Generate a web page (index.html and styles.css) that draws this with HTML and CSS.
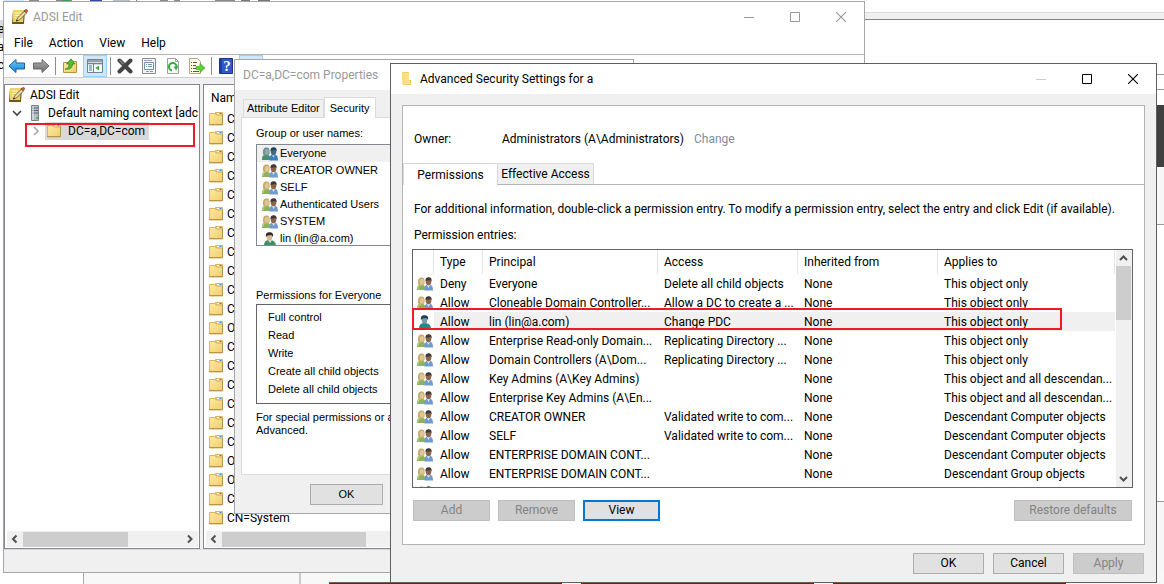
FILE: index.html
```html
<!DOCTYPE html>
<html lang="en">
<head>
  <meta charset="UTF-8">
  <meta name="viewport" content="width=device-width, initial-scale=1.0">
  <title>ADSI Edit - Advanced Security Settings</title>
  <link rel="stylesheet" href="styles.css">
</head>
<body>
  <!-- Shared icons -->
  <svg class="defs" aria-hidden="true">
    <defs>
      <linearGradient id="gold" x1="0" y1="0" x2="1" y2="1">
        <stop offset="0" stop-color="#ffeaa2"/>
        <stop offset="1" stop-color="#f0cc72"/>
      </linearGradient>
      <linearGradient id="blue" x1="0" y1="0" x2="0" y2="1">
        <stop offset="0" stop-color="#6fd0ff"/>
        <stop offset="1" stop-color="#0e7fd0"/>
      </linearGradient>
      <linearGradient id="grey" x1="0" y1="0" x2="0" y2="1">
        <stop offset="0" stop-color="#b0b0b0"/>
        <stop offset="1" stop-color="#6c6c6c"/>
      </linearGradient>
      <symbol id="i-app" viewBox="0 0 16 16">
        <path d="M1 1h12l-1 14H0z" fill="#6f5a10"/>
        <path d="M1 1h11l-1 12H1z" fill="#ecd36c"/>
        <path d="M3 4h6M3 6.500h5M3 9h3" stroke="#fff7d0" stroke-width="1.200"/>
        <path d="M4.500 12l1-3 7-7 2 2-7 7z" fill="#e9dca8" stroke="#5b4a22" stroke-width=".8"/>
        <path d="M12 2l1.300-1.200a1.200 1.200 0 0 1 2 2L14.200 4z" fill="#d4523c" stroke="#6b4b3c" stroke-width=".5"/>
        <path d="M4 12.500l.8-2 1.200 1.200z" fill="#222"/>
      </symbol>
      <symbol id="i-folder" viewBox="0 0 14 14">
        <path d="M.5 1.500h6v1h7v10.500H.5z" fill="url(#gold)" stroke="#d8b662"/>
        <path d="M6.500.5h7v2.500h-6z" fill="#efe0ae" stroke="#c9a44e" stroke-width=".8"/>
        <path d="M8.500 1.500h2" stroke="#fff"/>
        <path d="M10.500 1.500h2" stroke="#2f8ee0"/>
        <path d="M0 12.500h13.500V3" fill="none" stroke="#b8944a"/>
      </symbol>
      <symbol id="i-users" viewBox="0 0 16 14">
        <path d="M0 13c0-4 1-5.500 4-5.500s4.500 1.500 4.500 5.500z" fill="#8cb25c"/>
        <path d="M1 12c0-3 .5-3.500 3-3.500" stroke="#c3d99b" fill="none"/>
        <path d="M1 7C.5 2 2 .5 4.500.5S8 2 7.500 7l-2 1.500h-3z" fill="#c2ae66"/>
        <ellipse cx="4.800" cy="4.800" rx="2" ry="2.800" fill="#e5c39d"/>
        <path d="M7.500 13.500c0-4.500 1-6 4-6s4.500 1.500 4.500 6z" fill="#6f9bcf"/>
        <path d="M10 8l1.500 3 1.500-3z" fill="#dfe9f6"/>
        <ellipse cx="11.500" cy="4.500" rx="2.800" ry="3.700" fill="#8d6446"/>
        <path d="M8.500 4C8.300 1.200 9.600.3 11.600.3s3.400 1 3 4.200L13.600 3z" fill="#3f3a38"/>
      </symbol>
      <symbol id="i-users-on" viewBox="0 0 16 14">
        <path d="M0 13c0-4 1-5.500 4-5.500s4.500 1.500 4.500 5.500z" fill="#46916f"/>
        <path d="M1 7C.5 2 2 .5 4.500.5S8 2 7.500 7l-2 1.500h-3z" fill="#6f8f8a"/>
        <ellipse cx="4.800" cy="4.800" rx="2" ry="2.800" fill="#8fa9ae"/>
        <path d="M7.500 13.500c0-4.500 1-6 4-6s4.500 1.500 4.500 6z" fill="#3a7cc0"/>
        <path d="M10 8l1.500 3 1.500-3z" fill="#a5c8e6"/>
        <ellipse cx="11.500" cy="4.500" rx="2.800" ry="3.700" fill="#456780"/>
        <path d="M8.500 4C8.300 1.200 9.600.3 11.600.3s3.400 1 3 4.200L13.600 3z" fill="#1f4560"/>
      </symbol>
      <symbol id="i-user" viewBox="0 0 16 14">
        <path d="M2 14c0-4 1.500-6 5.500-6s6.500 2 6.500 6z" fill="#3c9068"/>
        <path d="M6 8l2 3 2-3z" fill="#d8efe2"/>
        <ellipse cx="7.500" cy="5" rx="2.800" ry="3.700" fill="#d9b592"/>
        <path d="M4 5C3.300 1.500 5 .2 7.500 .2s4.200 1.300 3.500 4.800L9.500 3 5.500 3.500z" fill="#332d2a"/>
      </symbol>
      <symbol id="i-user-on" viewBox="0 0 16 14">
        <path d="M2 14c0-4 1.500-6 5.500-6s6.500 2 6.500 6z" fill="#1f8a8c"/>
        <ellipse cx="7.500" cy="5" rx="2.800" ry="3.700" fill="#7d98a0"/>
        <path d="M4 5C3.300 1.500 5 .2 7.500 .2s4.200 1.300 3.500 4.800L9.500 3 5.500 3.500z" fill="#1c3f59"/>
      </symbol>
      <symbol id="i-left" viewBox="0 0 16 16">
        <path d="M9.500 4.500L6 8l3.500 3.500" fill="none" stroke="#505050" stroke-width="2"/>
      </symbol>
      <symbol id="i-right" viewBox="0 0 16 16">
        <path d="M6 4.500L9.500 8 6 11.500" fill="none" stroke="#505050" stroke-width="2"/>
      </symbol>
      <symbol id="i-up" viewBox="0 0 16 16">
        <path d="M4 10l3.500-3.500L11 10" fill="none" stroke="#505050" stroke-width="2"/>
      </symbol>
      <symbol id="i-down" viewBox="0 0 16 16">
        <path d="M4 6l3.500 3.500L11 6" fill="none" stroke="#505050" stroke-width="2"/>
      </symbol>
      <symbol id="i-min" viewBox="0 0 10 10"><path d="M0 5.500h10" stroke="currentColor"/></symbol>
      <symbol id="i-max" viewBox="0 0 10 10"><path d="M.5.5h9v9h-9z" fill="none" stroke="currentColor"/></symbol>
      <symbol id="i-close" viewBox="0 0 10 10"><path d="M0 0l10 10M10 0L0 10" stroke="currentColor" stroke-width="1.100"/></symbol>
    </defs>
  </svg>

  <div class="desktop">
    <!-- Windows left open behind -->
    <div class="back back-top"></div>
    <div class="back back-left"><span>e</span><span>a</span><span>c</span></div>
    <div class="back back-icons">
      <svg width="530" height="2" viewBox="0 0 530 2"><path d="M29 1h10M56 1h16M160 1h8M174 1h6M215 1h20" stroke="#8a8a8a" stroke-width="2"/><path d="M4 1h20" stroke="#cce8ff" stroke-width="2"/><path d="M62 1h8" stroke="#3f9b4b" stroke-width="2"/><path d="M90 1h12" stroke="#2c4b9e" stroke-width="2"/><path d="M113 1h17" stroke="#b4c0cc" stroke-width="2"/><path d="M136 1h1M241 1h9M258 1h12" stroke="#777" stroke-width="2"/></svg>
    </div>
    <div class="back back-right"></div>
    <div class="back back-right-low"></div>
    <div class="back back-bottom"><i></i><i></i><i></i></div>

    <!-- ADSI Edit -->
    <section class="window adsi">
      <header class="titlebar">
        <svg class="app-icon" width="16" height="16"><use href="#i-app"/></svg>
        <span class="title">ADSI Edit</span>
        <button class="ctl" aria-label="Minimize"><svg width="10" height="10"><use href="#i-min"/></svg></button>
        <button class="ctl" aria-label="Maximize"><svg width="10" height="10"><use href="#i-max"/></svg></button>
        <button class="ctl" aria-label="Close"><svg width="10" height="10"><use href="#i-close"/></svg></button>
      </header>
      <nav class="menubar">
        <button>File</button>
        <button>Action</button>
        <button>View</button>
        <button>Help</button>
      </nav>
      <div class="toolbar">
        <button aria-label="Back"><svg width="18" height="16" viewBox="0 0 18 16"><path d="M1 8l7-6.500v3.500h8.500v6H8v3.500z" fill="url(#blue)" stroke="#1a5f9c"/></svg></button>
        <button aria-label="Forward"><svg width="18" height="16" viewBox="0 0 18 16"><path d="M17 8l-7-6.500v3.500H1.500v6H10v3.500z" fill="url(#grey)" stroke="#666"/></svg></button>
        <span class="sep"></span>
        <button aria-label="Up one level"><svg width="16" height="16" viewBox="0 0 16 16"><path d="M1.500 4.500h5l1-1h7v11h-13z" fill="url(#gold)" stroke="#b89346"/><path d="M3 11c3 0 4-2 4-5H4.500L9 .8 13 6h-2.500c0 4-3 6-7.500 5z" fill="#4fc02c" stroke="#2c8418" stroke-width=".7"/></svg></button>
        <button class="on" aria-label="Show or hide console tree"><svg width="16" height="16" viewBox="0 0 16 16"><path d="M.5 1.500h15v13H.5z" fill="#f6f9fc" stroke="#76818f"/><path d="M1 3h14M1 5.500h14" stroke="#76818f" stroke-width="1.400"/><path d="M6.500 6v8.500" stroke="#76818f"/><path d="M2 8h3M2 10h3M2 12h3" stroke="#3878c0"/><path d="M12 7.500v5L8.500 10z" fill="#36a836"/></svg></button>
        <span class="sep"></span>
        <button aria-label="Delete"><svg width="16" height="16" viewBox="0 0 16 16"><path d="M2.500 2.500l11 11M13.500 2.500l-11 11" stroke="#444" stroke-width="4" stroke-linecap="round"/><path d="M2.500 2.200l4 4" stroke="#888" stroke-width="1.300"/></svg></button>
        <button aria-label="Properties"><svg width="16" height="16" viewBox="0 0 16 16"><path d="M1.500.5h13v15h-13z" fill="#f4f4f4" stroke="#8c8c8c"/><path d="M3.500 4.500h9v7h-9z" fill="#fff" stroke="#7990a8"/><path d="M3 2.500h8" stroke="#9aa4b0"/><path d="M5 6.500h1M7 6.500h4M5 8.500h1M7 8.500h4" stroke="#7990a8"/><path d="M5 13.500h3M9 13.500h3" stroke="#35b7d8"/></svg></button>
        <button aria-label="Refresh"><svg width="16" height="16" viewBox="0 0 16 16"><path d="M2.500.5h8l3 3v12h-11z" fill="#fafafa" stroke="#a0a0a0"/><path d="M10.500.5v3h3" fill="none" stroke="#a0a0a0"/><path d="M7 12.500a3.800 3.800 0 1 1 4.500-3.500" fill="none" stroke="#35ad3a" stroke-width="2"/><path d="M8.500 8.500h5L11 12.500z" fill="#35ad3a"/></svg></button>
        <button aria-label="Export list"><svg width="18" height="16" viewBox="0 0 18 16"><path d="M1.500.5h8l3 3v12h-11z" fill="#fffbe2" stroke="#b0a988"/><path d="M3 4.500h1M5 4.500h4M3 7.500h1M5 7.500h3M3 10.500h1M5 10.500h3M3 13.500h1M5 13.500h6" stroke="#555"/><path d="M8 8.500h4V5.500l5 4.500-5 4.500v-3H8z" fill="#5fd02f" stroke="#3c9c22" stroke-width=".6"/></svg></button>
        <span class="sep"></span>
        <button class="help" aria-label="Help"><svg width="14" height="16" viewBox="0 0 14 16"><path d="M.5.500h13v15H.5z" fill="#3159c8" stroke="#1c3480"/><path d="M1 1h2v14H1z" fill="#1f3f9e"/><text x="8" y="13" text-anchor="middle">?</text></svg></button>
        <button class="on" aria-label="Show or hide action pane"></button>
      </div>
      <div class="panes">
        <div class="pane tree">
          <ul class="tree-list">
            <li class="lvl0"><svg width="16" height="16"><use href="#i-app"/></svg>ADSI Edit</li>
            <li class="lvl1">
              <svg width="10" height="10" viewBox="0 0 10 10"><path d="M1 3l4 4 4-4" fill="none" stroke="#404040" stroke-width="1.600"/></svg>
              <svg class="server" width="10" height="16" viewBox="0 0 10 16"><path d="M1.500.5h7v15h-7z" fill="#b4bcc4" stroke="#77828c"/><path d="M2 3h6M2 5.500h6M2 8h6" stroke="#5d6870"/><path d="M2 1h2v14H2z" fill="#dde2e6" opacity=".6"/><path d="M6 12h2v2H6z" fill="#4fc04f"/></svg>
              Default naming context [adc.a.com]
            </li>
            <li class="lvl2">
              <svg width="8" height="10" viewBox="0 0 8 10"><path d="M2 1l4 4-4 4" fill="none" stroke="#a6a6a6" stroke-width="1.600"/></svg>
              <span class="selected"><svg width="14" height="14"><use href="#i-folder"/></svg>DC=a,DC=com</span>
            </li>
          </ul>
          <div class="mark mark-tree"></div>
          <div class="hscroll">
            <svg width="16" height="16"><use href="#i-left"/></svg>
            <span class="track"><span class="thumb"></span></span>
            <svg width="16" height="16"><use href="#i-right"/></svg>
          </div>
        </div>
        <div class="pane objects">
          <div class="objects-head">Name</div>
          <ul class="objects-list">
            <li><svg width="14" height="14"><use href="#i-folder"/></svg>CN=</li>
            <li><svg width="14" height="14"><use href="#i-folder"/></svg>CN=</li>
            <li><svg width="14" height="14"><use href="#i-folder"/></svg>CN=</li>
            <li><svg width="14" height="14"><use href="#i-folder"/></svg>CN=</li>
            <li><svg width="14" height="14"><use href="#i-folder"/></svg>CN=</li>
            <li><svg width="14" height="14"><use href="#i-folder"/></svg>CN=</li>
            <li><svg width="14" height="14"><use href="#i-folder"/></svg>CN=</li>
            <li><svg width="14" height="14"><use href="#i-folder"/></svg>CN=</li>
            <li><svg width="14" height="14"><use href="#i-folder"/></svg>CN=</li>
            <li><svg width="14" height="14"><use href="#i-folder"/></svg>CN=</li>
            <li><svg width="14" height="14"><use href="#i-folder"/></svg>CN=</li>
            <li><svg width="14" height="14"><use href="#i-folder"/></svg>OU=</li>
            <li><svg width="14" height="14"><use href="#i-folder"/></svg>CN=</li>
            <li><svg width="14" height="14"><use href="#i-folder"/></svg>CN=</li>
            <li><svg width="14" height="14"><use href="#i-folder"/></svg>CN=</li>
            <li><svg width="14" height="14"><use href="#i-folder"/></svg>CN=</li>
            <li><svg width="14" height="14"><use href="#i-folder"/></svg>CN=</li>
            <li><svg width="14" height="14"><use href="#i-folder"/></svg>CN=</li>
            <li><svg width="14" height="14"><use href="#i-folder"/></svg>OU=</li>
            <li><svg width="14" height="14"><use href="#i-folder"/></svg>OU=</li>
            <li><svg width="14" height="14"><use href="#i-folder"/></svg>CN=</li>
            <li><svg width="14" height="14"><use href="#i-folder"/></svg>CN=System</li>
          </ul>
          <div class="hscroll">
            <svg width="16" height="16"><use href="#i-left"/></svg>
            <span class="track"><span class="thumb thumb-wide"></span></span>
            <svg width="16" height="16"><use href="#i-right"/></svg>
          </div>
        </div>
      </div>
      <footer class="statusbar"></footer>
    </section>

    <!-- Properties -->
    <section class="window props">
      <header class="titlebar"><span class="title">DC=a,DC=com Properties</span></header>
      <div class="props-body">
        <div class="props-tabs">
          <button>Attribute Editor</button>
          <button class="active">Security</button>
        </div>
        <div class="props-panel">
          <p class="props-label">Group or user names:</p>
          <ul class="group-list">
            <li class="selected"><svg width="16" height="14"><use href="#i-users-on"/></svg>Everyone</li>
            <li><svg width="16" height="14"><use href="#i-users"/></svg>CREATOR OWNER</li>
            <li><svg width="16" height="14"><use href="#i-users"/></svg>SELF</li>
            <li><svg width="16" height="14"><use href="#i-users"/></svg>Authenticated Users</li>
            <li><svg width="16" height="14"><use href="#i-users"/></svg>SYSTEM</li>
            <li><svg width="16" height="14"><use href="#i-user"/></svg>lin (lin@a.com)</li>
          </ul>
          <p class="props-label perm-label">Permissions for Everyone</p>
          <ul class="perm-list">
            <li>Full control</li>
            <li>Read</li>
            <li>Write</li>
            <li>Create all child objects</li>
            <li>Delete all child objects</li>
          </ul>
          <p class="props-note">For special permissions or ad<br>Advanced.</p>
        </div>
        <div class="props-footer"><button class="btn">OK</button></div>
      </div>
    </section>

    <!-- Advanced Security Settings -->
    <section class="window advanced">
      <header class="titlebar">
        <svg class="app-icon" width="10" height="14" viewBox="0 0 10 14"><path d="M1 0h6v8h2v5H1z" fill="#f2cc62"/><path d="M3 1h4v8h1v3H3z" fill="#ffe190"/><path d="M0 0l3 1.500V14l-3-2z" fill="#fbdc85"/></svg>
        <h1 class="title">Advanced Security Settings for a</h1>
        <button class="ctl" aria-label="Minimize" disabled><svg width="10" height="10"><use href="#i-min"/></svg></button>
        <button class="ctl" aria-label="Maximize"><svg width="10" height="10"><use href="#i-max"/></svg></button>
        <button class="ctl" aria-label="Close"><svg width="10" height="10"><use href="#i-close"/></svg></button>
      </header>
      <div class="adv-body">
        <div class="adv-panel">
          <div class="owner">
            <span class="owner-label">Owner:</span>
            <span>Administrators (A\Administrators)</span>
            <a href="#">Change</a>
          </div>
          <div class="adv-tabs">
            <button class="active">Permissions</button>
            <button>Effective Access</button>
          </div>
          <div class="adv-content">
            <p>For additional information, double-click a permission entry. To modify a permission entry, select the entry and click Edit (if available).</p>
            <p class="entries-label" id="entries">Permission entries:</p>
            <div class="entries">
              <div class="entries-view">
                <table aria-labelledby="entries">
                  <colgroup>
                    <col class="c-icon"><col class="c-type"><col class="c-principal"><col class="c-access"><col class="c-inherited"><col>
                  </colgroup>
                  <thead>
                    <tr><th></th><th>Type</th><th>Principal</th><th>Access</th><th>Inherited from</th><th>Applies to</th></tr>
                  </thead>
                  <tbody>
                    <tr><td><svg width="16" height="14"><use href="#i-users"/></svg></td><td>Deny</td><td>Everyone</td><td>Delete all child objects</td><td>None</td><td>This object only</td></tr>
                    <tr><td><svg width="16" height="14"><use href="#i-users"/></svg></td><td>Allow</td><td>Cloneable Domain Controller...</td><td>Allow a DC to create a ...</td><td>None</td><td>This object only</td></tr>
                    <tr class="selected"><td><svg width="16" height="14"><use href="#i-user-on"/></svg></td><td>Allow</td><td>lin (lin@a.com)</td><td>Change PDC</td><td>None</td><td>This object only</td></tr>
                    <tr><td><svg width="16" height="14"><use href="#i-users"/></svg></td><td>Allow</td><td>Enterprise Read-only Domain...</td><td>Replicating Directory ...</td><td>None</td><td>This object only</td></tr>
                    <tr><td><svg width="16" height="14"><use href="#i-users"/></svg></td><td>Allow</td><td>Domain Controllers (A\Dom...</td><td>Replicating Directory ...</td><td>None</td><td>This object only</td></tr>
                    <tr><td><svg width="16" height="14"><use href="#i-users"/></svg></td><td>Allow</td><td>Key Admins (A\Key Admins)</td><td></td><td>None</td><td>This object and all descendan...</td></tr>
                    <tr><td><svg width="16" height="14"><use href="#i-users"/></svg></td><td>Allow</td><td>Enterprise Key Admins (A\En...</td><td></td><td>None</td><td>This object and all descendan...</td></tr>
                    <tr><td><svg width="16" height="14"><use href="#i-users"/></svg></td><td>Allow</td><td>CREATOR OWNER</td><td>Validated write to com...</td><td>None</td><td>Descendant Computer objects</td></tr>
                    <tr><td><svg width="16" height="14"><use href="#i-users"/></svg></td><td>Allow</td><td>SELF</td><td>Validated write to com...</td><td>None</td><td>Descendant Computer objects</td></tr>
                    <tr><td><svg width="16" height="14"><use href="#i-users"/></svg></td><td>Allow</td><td>ENTERPRISE DOMAIN CONT...</td><td></td><td>None</td><td>Descendant Computer objects</td></tr>
                    <tr><td><svg width="16" height="14"><use href="#i-users"/></svg></td><td>Allow</td><td>ENTERPRISE DOMAIN CONT...</td><td></td><td>None</td><td>Descendant Group objects</td></tr>
                    <tr><td><svg width="16" height="14"><use href="#i-users"/></svg></td><td></td><td></td><td></td><td></td><td></td></tr>
                  </tbody>
                </table>
              </div>
              <div class="vscroll">
                <svg width="16" height="16"><use href="#i-up"/></svg>
                <span class="vtrack"><span class="vthumb"></span></span>
                <svg width="16" height="16"><use href="#i-down"/></svg>
              </div>
              <div class="mark mark-entry"></div>
            </div>
            <div class="entry-actions">
              <button class="btn" disabled>Add</button>
              <button class="btn" disabled>Remove</button>
              <button class="btn default">View</button>
              <button class="btn restore" disabled>Restore defaults</button>
            </div>
          </div>
        </div>
        <div class="adv-footer">
          <button class="btn">OK</button>
          <button class="btn">Cancel</button>
          <button class="btn" disabled>Apply</button>
        </div>
      </div>
    </section>
  </div>
</body>
</html>
```
FILE: styles.css
```css
* {
  margin: 0;
  padding: 0;
  box-sizing: border-box;
}

body {
  font-family: 'Segoe UI', Roboto, sans-serif;
  font-size: 12px;
  line-height: 18px;
  color: #000;
  background: #fff;
}

ul {
  list-style: none;
}

button {
  font: inherit;
  color: inherit;
  background: none;
  border: none;
}

svg {
  display: block;
  flex: none;
}

.defs {
  position: absolute;
  width: 0;
  height: 0;
}

.desktop {
  position: relative;
  height: 100vh;
  min-height: 500px;
  overflow: hidden;
}

/* Background windows */
.back {
  position: absolute;
}

.back-top {
  top: 12px;
  left: 860px;
  right: 0;
  height: 8px;
  background: #f0f0f0;
  border-top: 1px solid #d9d9d9;
  border-bottom: 1px solid #828282;
}

.back-left {
  top: 20px;
  left: 0;
  width: 4px;
  overflow: hidden;
  direction: rtl;
}

.back-left span {
  display: block;
}

.back-left span:first-child {
  background: #d9d9d9;
}

.back-icons {
  top: 0;
  left: 0;
}

.back-right {
  top: 74px;
  right: 0;
  width: 8px;
  height: 151px;
  border-top: 1px solid #999;
  border-bottom: 1px solid #999;
  background: linear-gradient(#fff 14px, #999 14px, #999 15px, #fff 15px, #fff 30px, #404040 30px, #404040 92px, #f7f7f7 92px);
}

.back-right-low {
  top: 501px;
  right: 0;
  bottom: 0;
  width: 8px;
  background: #f7f7f7;
  border-top: 1px solid #999;
}

.back-bottom {
  left: 83px;
  right: 0;
  bottom: 0;
  height: 12px;
  display: flex;
  align-items: flex-end;
  gap: 19px;
  padding-left: 245px;
  border-left: 1px solid #aaa;
  background: linear-gradient(90deg, #f8f8f8 215px, #ccc 215px, #ccc 217px, #f8f8f8 217px);
}

.back-bottom i {
  width: 233px;
  height: 2px;
  background: #b00000;
  border-top: 1px solid #666;
}

/* Windows */
.window {
  position: absolute;
  display: flex;
  flex-direction: column;
  background: #f0f0f0;
  border: 1px solid #a6a6a6;
}

.titlebar {
  display: flex;
  align-items: center;
  flex: none;
  height: 30px;
  background: #fff;
}

.title {
  flex: 1;
  font-size: 12px;
  font-weight: normal;
}

.ctl {
  display: flex;
  align-items: center;
  justify-content: center;
  width: 46px;
  height: 30px;
}

.ctl:disabled {
  color: #ccc;
}

.mark {
  position: absolute;
  border: 2px solid #ed1c24;
}

/* ADSI Edit */
.adsi {
  top: 1px;
  left: 3px;
  right: 299px;
  bottom: 11px;
}

.adsi .titlebar {
  padding-left: 8px;
  color: #999;
}

.adsi .title {
  margin-left: 5px;
}

.menubar {
  display: flex;
  gap: 16px;
  padding: 2px 10px;
  background: #fff;
  border-bottom: 1px solid #b4b4b4;
}

.toolbar {
  display: flex;
  align-items: center;
  gap: 2px;
  height: 23px;
  padding: 0 2px;
  background: #fff;
  border-bottom: 1px solid #d0d0d0;
}

.toolbar button {
  display: flex;
  align-items: center;
  justify-content: center;
  width: 22px;
  height: 22px;
}

.toolbar .on {
  width: 24px;
  background: #cce8ff;
  border: 1px solid #99d1ff;
}

.toolbar .sep {
  width: 1px;
  height: 18px;
  margin: 0 1px;
  background: #8c8c8c;
}

.help text {
  font-family: 'Liberation Serif', serif;
  font-size: 15px;
  font-weight: bold;
  fill: #fff;
}

.panes {
  display: flex;
  flex: 1;
  gap: 3px;
  min-height: 0;
  padding-top: 6px;
}

.pane {
  position: relative;
  display: flex;
  flex-direction: column;
  background: #fff;
  border: 1px solid #828790;
}

.tree {
  width: 196px;
}

.tree-list {
  flex: 1;
  padding-top: 1px;
  overflow: hidden;
  white-space: nowrap;
}

.tree-list li {
  display: flex;
  align-items: center;
  height: 18px;
}

.lvl0 {
  gap: 5px;
  padding-left: 4px;
}

.lvl1 {
  gap: 8px;
  padding-left: 7px;
  margin-right: 1px;
  overflow: hidden;
}

.lvl2 {
  gap: 5px;
  padding-left: 27px;
}

.lvl2 .selected {
  display: flex;
  align-items: center;
  gap: 7px;
  padding: 0 4px 0 2px;
  background: #d9d9d9;
}

.mark-tree {
  top: 38px;
  left: 20px;
  right: 4px;
  height: 24px;
}

.hscroll {
  display: flex;
  flex: none;
  align-items: center;
  height: 16px;
  margin: 0 1px 1px 2px;
  background: #f0f0f0;
}

.track {
  flex: 1;
  height: 15px;
}

.thumb {
  display: block;
  width: 105px;
  height: 15px;
  background: #cdcdcd;
}

.thumb-wide {
  width: 144px;
}

.objects {
  flex: 1;
}

.objects-head {
  padding: 4px 7px 2px;
}

.objects-list {
  flex: 1;
  min-height: 0;
  overflow: hidden;
}

.objects-list li {
  display: flex;
  align-items: center;
  gap: 4px;
  height: 19px;
  padding-left: 5px;
}

.statusbar {
  height: 23px;
  border-top: 1px solid #d9d9d9;
}

/* Properties */
.props {
  top: 59px;
  left: 234px;
  width: 400px;
  bottom: 70px;
  font-family: 'Liberation Sans', Arial, sans-serif;
  font-size: 11px;
  line-height: 13px;
}

.props .titlebar {
  padding-left: 8px;
  font-family: 'Segoe UI', Roboto, sans-serif;
  color: #999;
}

.props-body {
  display: flex;
  flex-direction: column;
  flex: 1;
  min-height: 0;
  padding: 7px 6px;
}

.props-tabs {
  display: flex;
  align-items: flex-end;
  padding-left: 2px;
}

.props-tabs button {
  height: 18px;
  padding: 0 3px;
  border: 1px solid #dcdcdc;
  border-bottom: none;
}

.props-tabs .active {
  height: 21px;
  padding: 0 5px;
  margin-bottom: -1px;
  background: #fff;
  z-index: 1;
}

.props-panel {
  flex: 1;
  min-height: 0;
  padding: 9px 14px;
  background: #fff;
  border: 1px solid #dcdcdc;
}

.group-list {
  height: 102px;
  margin-top: 4px;
  overflow: hidden;
  border: 1px solid #828790;
}

.group-list li {
  display: flex;
  align-items: center;
  gap: 2px;
  height: 17px;
  padding-left: 5px;
}

.group-list .selected {
  background: #f0f0f0;
}

.perm-label {
  margin-top: 43px;
}

.perm-list {
  height: 100px;
  margin-top: 2px;
  padding: 3px 11px;
  border: 1px solid #646464;
}

.perm-list li {
  line-height: 18px;
}

.props-note {
  margin-top: 7px;
}

.btn {
  min-width: 73px;
  height: 21px;
  line-height: 19px;
  background: #e1e1e1;
  border: 1px solid #adadad;
}

.btn:disabled {
  color: #838383;
  background: #ccc;
  border-color: #bfbfbf;
}

.props-footer {
  padding: 9px 69px 1px;
}

/* Advanced Security Settings */
.advanced {
  top: 63px;
  left: 390px;
  right: 7px;
  bottom: 1px;
  border-color: #5f5f5f;
}

.advanced .titlebar {
  padding-left: 11px;
}

.advanced .title {
  margin-left: 8px;
}

.adv-body {
  display: flex;
  flex-direction: column;
  flex: 1;
  min-height: 0;
  padding: 11px 11px 8px;
}

.adv-panel {
  display: flex;
  flex-direction: column;
  flex: 1;
  min-height: 0;
  background: #fff;
  border: 1px solid #b4b4b4;
}

.owner {
  display: flex;
  padding: 24px 11px 15px;
}

.owner-label {
  width: 88px;
}

.owner a {
  margin-left: 10px;
  color: #838ba0;
  text-decoration: none;
}

.adv-tabs {
  display: flex;
  height: 22px;
}

.adv-tabs::after {
  content: '';
  flex: 1;
  border-bottom: 1px solid #b4b4b4;
}

.adv-tabs button {
  width: 97px;
  border: 1px solid #d9d9d9;
  border-bottom-color: #b4b4b4;
  background: #f0f0f0;
}

.adv-tabs .active {
  width: 94px;
  background: #fff;
  border-right: none;
  border-bottom: none;
}

.adv-content {
  display: flex;
  flex-direction: column;
  flex: 1;
  min-height: 0;
  padding: 15px 11px 23px 9px;
}

.adv-content p {
  padding-left: 2px;
  white-space: nowrap;
}

.adv-content .entries-label {
  margin: 8px 0 5px;
}

.entries {
  position: relative;
  display: flex;
  flex: 1;
  min-height: 0;
  border: 1px solid #646464;
}

.entries-view {
  flex: 1;
  min-width: 0;
  overflow: hidden;
}

table {
  width: 100%;
  table-layout: fixed;
  border-collapse: collapse;
}

.c-icon {
  width: 21px;
}

.c-type {
  width: 49px;
}

.c-principal {
  width: 175px;
}

.c-access,
.c-inherited {
  width: 140px;
}

th,
td {
  padding-left: 6px;
  text-align: left;
  font-weight: normal;
  white-space: nowrap;
}

th {
  height: 24px;
  box-shadow: inset -1px 0 #e5e5e5;
}

td {
  height: 19px;
}

td:first-child {
  padding-left: 4px;
}

tr.selected td:not(:first-child) {
  background: #f0f0f0;
}

.vscroll {
  display: flex;
  flex-direction: column;
  flex: none;
  width: 16px;
  margin-left: 1px;
  background: #f0f0f0;
}

.vtrack {
  flex: 1;
}

.vthumb {
  display: block;
  width: 15px;
  height: 54px;
  background: #cdcdcd;
}

.mark-entry {
  top: 58px;
  left: -1px;
  right: 70px;
  height: 22px;
}

.entry-actions {
  display: flex;
  gap: 8px;
  padding: 12px 1px 0;
}

.entry-actions .btn {
  width: 77px;
}

.entry-actions .default {
  border: 2px solid #0078d7;
  line-height: 17px;
}

.entry-actions .restore {
  width: 118px;
  margin-left: auto;
}

.adv-footer {
  display: flex;
  justify-content: flex-end;
  gap: 9px;
  padding: 8px 1px 0 0;
}

.adv-footer .btn {
  width: 71px;
  min-width: 0;
}
```
